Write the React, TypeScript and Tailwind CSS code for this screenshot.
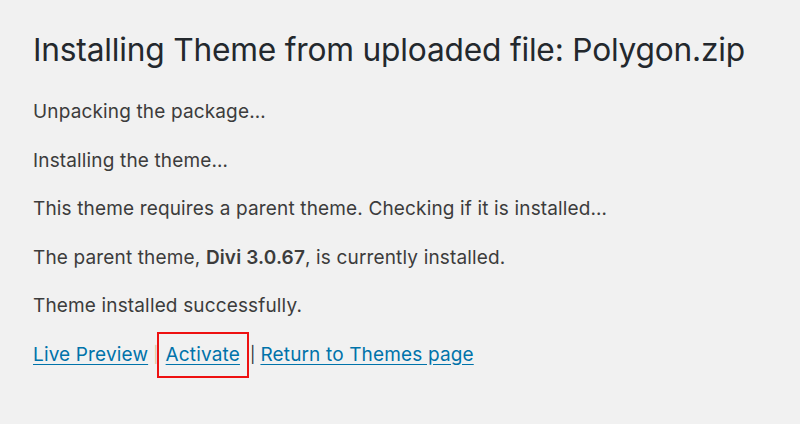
import React from "react";

export default function App() {
  return (
    <div className="w-[800px] h-[424px] bg-[#f1f1f1] overflow-hidden pl-[33px] pt-[26px]" style={{ fontFamily: "Inter, 'Noto Sans', sans-serif" }}>
      <h1 className="text-[31.7px] leading-[48px] font-normal text-[#23282d] tracking-[-0.2px]">
        Installing Theme from uploaded file: Polygon.zip
      </h1>
      <div className="mt-[24px] flex flex-col gap-[21.5px] text-[19px] leading-[27px] text-[#3c3c3c] tracking-[0.15px]">
        <p>Unpacking the package…</p>
        <p>Installing the theme…</p>
        <p>This theme requires a parent theme. Checking if it is installed…</p>
        <p>
          The parent theme, <strong className="font-semibold">Divi 3.0.67</strong>, is currently installed.
        </p>
        <p>Theme installed successfully.</p>
        <p className="flex items-center">
          <a href="#" className="text-[#0073aa] underline underline-offset-[3px]">Live Preview</a>
          <span className="mx-[5px] text-[#dcc6a0] text-[16px]">|</span>
          <span className="relative ml-[2px]">
            <a href="#" className="text-[#0073aa] underline underline-offset-[3px]">Activate</a>
            <span className="absolute left-[-9px] right-[-9px] top-[-9px] bottom-[-10px] border-2 border-[#ee1111] pointer-events-none" />
          </span>
          <span className="ml-[10px] mr-[5px] text-[#2c3338] text-[16px]">|</span>
          <a href="#" className="text-[#0073aa] underline underline-offset-[3px]">Return to Themes page</a>
        </p>
      </div>
    </div>
  );
}
